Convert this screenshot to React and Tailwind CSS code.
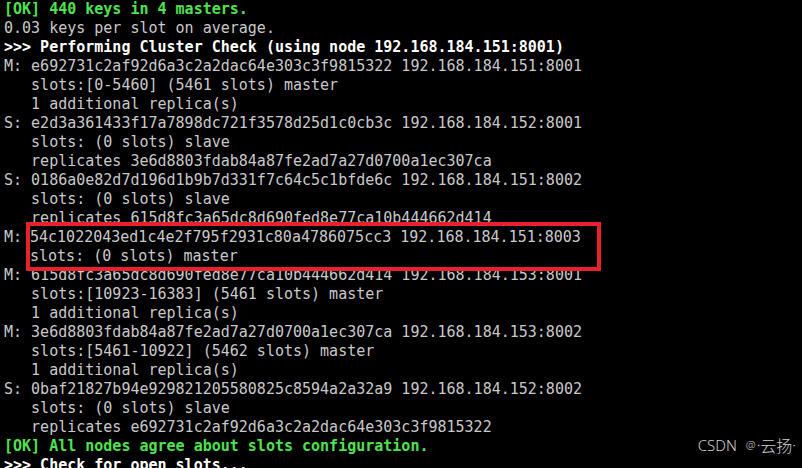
const lines = [
  { t: '[OK] 440 keys in 4 masters.', k: 'ok' },
  { t: '0.03 keys per slot on average.' },
  { t: '>>> Performing Cluster Check (using node 192.168.184.151:8001)', k: 'head' },
  { t: 'M: e692731c2af92d6a3c2a2dac64e303c3f9815322 192.168.184.151:8001' },
  { t: '   slots:[0-5460] (5461 slots) master' },
  { t: '   1 additional replica(s)' },
  { t: 'S: e2d3a361433f17a7898dc721f3578d25d1c0cb3c 192.168.184.152:8001' },
  { t: '   slots: (0 slots) slave' },
  { t: '   replicates 3e6d8803fdab84a87fe2ad7a27d0700a1ec307ca' },
  { t: 'S: 0186a0e82d7d196d1b9b7d331f7c64c5c1bfde6c 192.168.184.151:8002' },
  { t: '   slots: (0 slots) slave' },
  { t: '   replicates 615d8fc3a65dc8d690fed8e77ca10b444662d414' },
  { t: 'M: ' },
  { t: '' },
  { t: 'M: 615d8fc3a65dc8d690fed8e77ca10b444662d414 192.168.184.153:8001' },
  { t: '   slots:[10923-16383] (5461 slots) master' },
  { t: '   1 additional replica(s)' },
  { t: 'M: 3e6d8803fdab84a87fe2ad7a27d0700a1ec307ca 192.168.184.153:8002' },
  { t: '   slots:[5461-10922] (5462 slots) master' },
  { t: '   1 additional replica(s)' },
  { t: 'S: 0baf21827b94e929821205580825c8594a2a32a9 192.168.184.152:8002' },
  { t: '   slots: (0 slots) slave' },
  { t: '   replicates e692731c2af92d6a3c2a2dac64e303c3f9815322' },
  { t: '[OK] All nodes agree about slots configuration.', k: 'ok' },
  { t: '>>> Check for open slots...', k: 'head' },
];

const Line = ({ t, k }) => {
  const cls =
    k === 'ok'
      ? 'text-[#4fe24f] font-bold'
      : k === 'head'
      ? 'text-white font-bold'
      : 'text-[#c9c9c9]';
  return <div className={`h-[19px] whitespace-pre ${cls}`}>{t}</div>;
};

export default function App() {
  return (
    <div className="relative w-[802px] h-[468px] overflow-hidden bg-black font-['DejaVu_Sans_Mono',monospace] text-[15px] leading-[19px]">
      {/* terminal output */}
      <div className="pl-[4px]">
        {lines.map((l, i) => (
          <Line key={i} {...l} />
        ))}
      </div>

      {/* highlighted node pasted over */}
      <div className="absolute left-[26px] top-[222px] w-[575px] h-[49px] border-4 border-[#e8212b] bg-black pt-[2px] text-[#c9c9c9] whitespace-pre">
        <div className="h-[19px]">54c1022043ed1c4e2f795f2931c80a4786075cc3 192.168.184.151:8003</div>
        <div className="h-[19px]">slots: (0 slots) master</div>
      </div>

      {/* watermark */}
      <div className="absolute right-[6px] top-[435px] flex items-center text-[15px] leading-[20px] text-[#cfcfcf] font-['Noto_Sans',sans-serif] font-light">
        <span>CSDN</span>
        <span className="ml-[9px] text-[11px]">@</span>
        <span className="ml-[1px]">·</span>
        <span className="font-['Noto_Sans_CJK_SC',sans-serif] text-[16px]">云扬</span>
        <span>·</span>
      </div>
    </div>
  );
}
